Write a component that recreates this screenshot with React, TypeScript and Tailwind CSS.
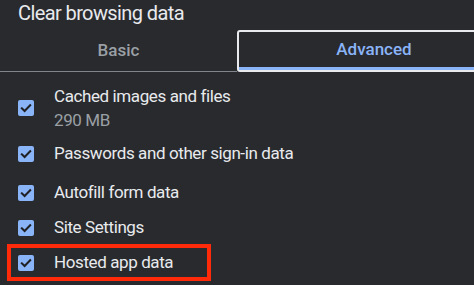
import React from "react";

function Check() {
  return (
    <div className="w-4 h-4 rounded-[2px] bg-[#8ab4f8] flex items-center justify-center shrink-0">
      <svg width="16" height="16" viewBox="0 0 16 16" fill="none">
        <path d="M3.8 8.3 L6.6 11 L12.2 5.2" stroke="#202124" strokeWidth="2" strokeLinecap="square" />
      </svg>
    </div>
  );
}

export default function App() {
  return (
    <div
      className="w-[474px] h-[285px] bg-[#292a2d] overflow-hidden text-[#e8eaed]"
      style={{ fontFamily: "Roboto, 'Liberation Sans', sans-serif" }}
    >
      <div className="h-[26px] pl-[18px] text-[20px] leading-[26px] tracking-[-0.6px]">Clear browsing data</div>
      <div className="mt-[4px] h-[42px] flex w-[511px]">
        <div className="w-[237px] h-full border-b border-[#80868b] flex items-center justify-center text-[17px] font-medium text-[#9aa0a6]">
          Basic
        </div>
        <div className="w-[274px] h-full rounded-[3px] border-2 border-[#e8eaed] flex flex-col">
          <div className="flex-1 flex items-center justify-center text-[17px] font-medium text-[#8ab4f8] pt-[1px]">
            Advanced
          </div>
          <div className="h-[3px] bg-[#8ab4f8]" />
        </div>
      </div>
      <div className="flex flex-col text-[17px] tracking-[-0.4px]">
        <div className="h-[60px] pt-[12px] flex items-center pl-[18px] gap-[20px]">
          <Check />
          <div className="flex flex-col leading-[24px]">
            <span>Cached images and files</span>
            <span className="text-[#9aa0a6]">290 MB</span>
          </div>
        </div>
        <div className="h-[43px] flex items-center pl-[18px] gap-[20px]">
          <Check />
          <span>Passwords and other sign-in data</span>
        </div>
        <div className="h-[36px] flex items-center pl-[18px] gap-[20px]">
          <Check />
          <span>Autofill form data</span>
        </div>
        <div className="h-[33px] flex items-center pl-[18px] gap-[20px]">
          <Check />
          <span>Site Settings</span>
        </div>
        <div className="ml-[7px] w-[204px] h-[37px] border-4 border-[#ff2a0a] flex items-center pl-[7px] gap-[20px]">
          <Check />
          <span>Hosted app data</span>
        </div>
      </div>
    </div>
  );
}
